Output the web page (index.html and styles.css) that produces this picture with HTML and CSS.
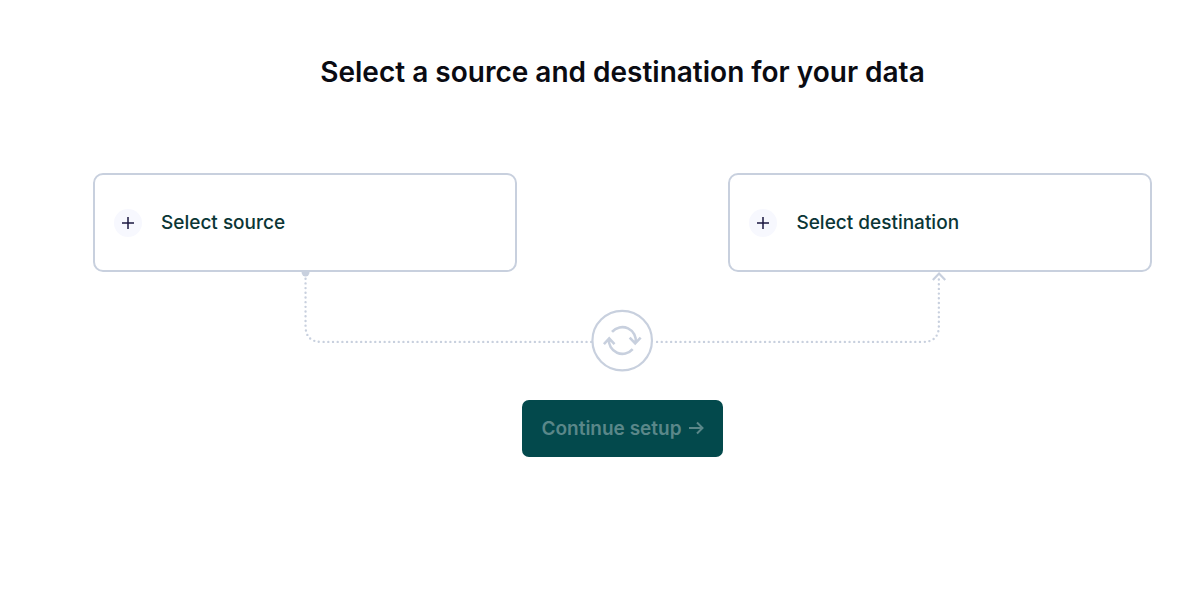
FILE: index.html
```html
<!DOCTYPE html>
<html lang="en">
<head>
    <meta charset="UTF-8">
    <meta name="viewport" content="width=device-width, initial-scale=1.0">
    <title>Select a source and destination</title>
    <link rel="stylesheet" href="styles.css">
</head>
<body>

    <main class="setup">
        <h1>Select a source and destination for your data</h1>

        <div class="cards">
            <button type="button" class="card">
                <span class="plus">
                    <svg viewBox="0 0 12 12" width="12" height="12" aria-hidden="true"><path d="M6 0v12M0 6h12"/></svg>
                </span>
                Select source
            </button>
            <button type="button" class="card">
                <span class="plus">
                    <svg viewBox="0 0 12 12" width="12" height="12" aria-hidden="true"><path d="M6 0v12M0 6h12"/></svg>
                </span>
                Select destination
            </button>
        </div>

        <!-- Dotted line from the source card to the destination card -->
        <svg class="connector" viewBox="0 0 636 100" aria-hidden="true">
            <path class="start" d="M-3.5 0a4 4.6 0 0 0 8 0z"/>
            <path class="dots" d="M.5 6.7V54Q.5 70 16.5 70H287"/>
            <path class="dots" d="M634.5 7.5V54Q634.5 70 618.5 70H348"/>
            <path class="line" d="M628.5 8l6.2-6.500 6.2 6.500"/>
            <circle class="line" cx="317.5" cy="68.7" r="29.8"/>
            <path class="sync" d="M307.3 59.900A13.600 13.600 0 0 1 331 71M325 65.700l5.500 5.800 5.500-5.800"/>
            <path class="sync" d="M328 77.300A13.600 13.600 0 0 1 304.200 67M299.200 72.200l5.300-5.800 5.300 5.800"/>
        </svg>

        <button type="button" class="continue" disabled>
            Continue setup
            <svg viewBox="0 0 16 14" width="16" height="14" aria-hidden="true"><path d="M1 7h13.500M9 1.500l5.500 5.500-5.500 5.500"/></svg>
        </button>
    </main>

</body>
</html>
```
FILE: styles.css
```css
* {
    box-sizing: border-box;
    margin: 0;
    padding: 0;
}

body {
    background: #fff;
    font-family: Inter, "Liberation Sans", sans-serif;
}

.setup {
    display: flex;
    flex-direction: column;
    align-items: center;
    padding: 52px 48px 52px 93px;
}

h1 {
    margin-bottom: 81px;
    color: #0a0b12;
    font-size: 28px;
    font-weight: 600;
    line-height: 40px;
    text-align: center;
}

.cards {
    display: flex;
    justify-content: space-between;
    width: 100%;
}

.card {
    display: flex;
    align-items: center;
    gap: 19px;
    width: 40%;
    padding: 33px 19px;
    border: 2px solid #c8d0de;
    border-radius: 10px;
    background: #fff;
    color: #0b3636;
    font-family: inherit;
    font-size: 19px;
    font-weight: 500;
    line-height: 29px;
    text-align: left;
    cursor: pointer;
}

.plus {
    display: flex;
    align-items: center;
    justify-content: center;
    width: 28px;
    height: 28px;
    border-radius: 50%;
    background: #f7f8fe;
}

.plus path {
    fill: none;
    stroke: #1b1740;
    stroke-width: 1.5;
}

.connector {
    width: 60%;
    margin-bottom: 28px;
    overflow: visible;
    fill: none;
    stroke: #c8d0de;
}

.connector .start {
    fill: #c8d0de;
    stroke: none;
}

.connector .line {
    stroke-width: 2.2;
}

.connector .dots {
    stroke-width: 2.4;
    stroke-dasharray: 0 4.7;
    stroke-linecap: round;
}

.connector .sync {
    stroke-width: 2.6;
}

.continue {
    display: flex;
    align-items: center;
    gap: 6px;
    padding: 14px 19px;
    border: none;
    border-radius: 7px;
    background: #03494c;
    color: #5a8789;
    font-family: inherit;
    font-size: 19px;
    font-weight: 600;
    line-height: 29px;
}

.continue path {
    fill: none;
    stroke: #5a8789;
    stroke-width: 2;
}

@media (max-width: 768px) {
    .setup {
        padding: 32px 20px;
    }

    .card {
        width: 48%;
    }
}
```
